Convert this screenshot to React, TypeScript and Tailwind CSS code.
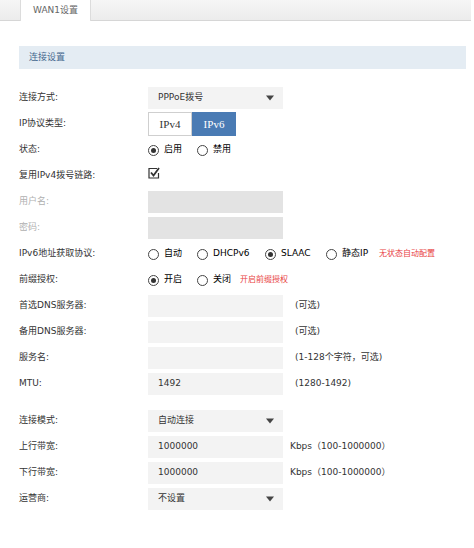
import React from "react";

const FONT = "font-['DejaVu_Sans','Noto_Sans_CJK_SC',sans-serif]";

function Radio({ checked }: { checked?: boolean }) {
  return (
    <span className="inline-flex h-[11px] w-[11px] items-center justify-center rounded-full border border-[#444] bg-white">
      {checked && <span className="h-[5px] w-[5px] rounded-full bg-[#333]" />}
    </span>
  );
}

function RadioItem({ label, checked, className }: { label: string; checked?: boolean; className?: string }) {
  return (
    <span className={`inline-flex items-center ${className || ""}`}>
      <Radio checked={checked} />
      <span className="ml-[5px]">{label}</span>
    </span>
  );
}

function Row({ label, children, muted }: { label: string; children?: React.ReactNode; muted?: boolean }) {
  return (
    <div className="flex h-[26px] items-center">
      <div className={`w-[129px] shrink-0 ${muted ? "text-[#b0b0b0]" : "text-[#333]"}`}>{label}</div>
      {children}
    </div>
  );
}

function TextBox({ value, disabled }: { value?: string; disabled?: boolean }) {
  return (
    <div
      className={`flex h-[22px] w-[135px] items-center px-[10px] ${disabled ? "bg-[#e3e3e3]" : "bg-[#f3f3f3]"} text-[#333]`}
    >
      {value}
    </div>
  );
}

function Select({ value }: { value: string }) {
  return (
    <div className="flex h-[22px] w-[135px] items-center justify-between bg-[#f3f3f3] pl-[10px] pr-[9px] text-[#333]">
      <span>{value}</span>
      <svg width="8" height="6" viewBox="0 0 8 6">
        <path d="M0 0.5 H8 L4 5.5 Z" fill="#444" />
      </svg>
    </div>
  );
}

function Hint({ children, ml = "ml-[12px]" }: { children: React.ReactNode; ml?: string }) {
  return <span className={`${ml} text-[#333]`}>{children}</span>;
}

export default function App() {
  return (
    <div className={`h-[548px] w-[474px] bg-white text-[9px] ${FONT}`}>
      {/* tab bar */}
      <div className="flex h-[21px] w-[471px] border-b border-[#d6d6d6] bg-gradient-to-b from-[#f6f6f6] to-[#ececec]">
        <div className="ml-[20px] flex h-[21px] w-[71px] items-center justify-center border-x border-[#dcdcdc] bg-white text-[#666]">
          WAN1设置
        </div>
      </div>

      <div className="pl-[19px] pr-[8px]">
        {/* section header */}
        <div className="mt-[25px] flex h-[23px] items-center bg-[#e4ecf3] pl-[10px] text-[#46698f]">连接设置</div>

        <div className="mt-[16px]">
          <Row label="连接方式:">
            <Select value="PPPoE拨号" />
          </Row>
          <Row label="IP协议类型:">
            <div className="flex h-[24px]">
              <div className="flex w-[44px] items-center justify-center border border-[#cfcfcf] bg-white font-['Liberation_Serif',serif] text-[11px] text-[#333]">
                IPv4
              </div>
              <div className="flex w-[44px] items-center justify-center bg-[#4a7bb4] font-['Liberation_Serif',serif] text-[11px] text-white">
                IPv6
              </div>
            </div>
          </Row>
          <Row label="状态:">
            <RadioItem label="启用" checked className="w-[49px]" />
            <RadioItem label="禁用" />
          </Row>
          <Row label="复用IPv4拨号链路:">
            <svg width="12" height="12" viewBox="0 0 12 12" className="-mt-[6px]">
              <path d="M9 1.5 H1 V11 H10.5 V6" fill="none" stroke="#333" strokeWidth="1.2" />
              <path d="M3 5.5 L5.5 8.5 L11 1" fill="none" stroke="#333" strokeWidth="1.8" />
            </svg>
          </Row>
          <Row label="用户名:" muted>
            <TextBox disabled />
          </Row>
          <Row label="密码:" muted>
            <TextBox disabled />
          </Row>
          <Row label="IPv6地址获取协议:">
            <RadioItem label="自动" className="w-[49px]" />
            <RadioItem label="DHCPv6" className="w-[68px]" />
            <RadioItem label="SLAAC" checked className="w-[61px]" />
            <RadioItem label="静态IP" className="w-[53px]" />
            <span className="text-[8px] text-[#e8423f]">无状态自动配置</span>
          </Row>
          <Row label="前缀授权:">
            <RadioItem label="开启" checked className="w-[49px]" />
            <RadioItem label="关闭" className="w-[43px]" />
            <span className="text-[8px] text-[#e8423f]">开启前缀授权</span>
          </Row>
          <Row label="首选DNS服务器:">
            <TextBox />
            <Hint>(可选)</Hint>
          </Row>
          <Row label="备用DNS服务器:">
            <TextBox />
            <Hint>(可选)</Hint>
          </Row>
          <Row label="服务名:">
            <TextBox />
            <Hint>(1-128个字符，可选)</Hint>
          </Row>
          <Row label="MTU:">
            <TextBox value="1492" />
            <Hint>(1280-1492)</Hint>
          </Row>
        </div>

        <div className="mt-[11px]">
          <Row label="连接模式:">
            <Select value="自动连接" />
          </Row>
          <Row label="上行带宽:">
            <TextBox value="1000000" />
            <Hint ml="ml-[7px]">Kbps（100-1000000）</Hint>
          </Row>
          <Row label="下行带宽:">
            <TextBox value="1000000" />
            <Hint ml="ml-[7px]">Kbps（100-1000000）</Hint>
          </Row>
          <Row label="运营商:">
            <Select value="不设置" />
          </Row>
        </div>
      </div>
    </div>
  );
}
